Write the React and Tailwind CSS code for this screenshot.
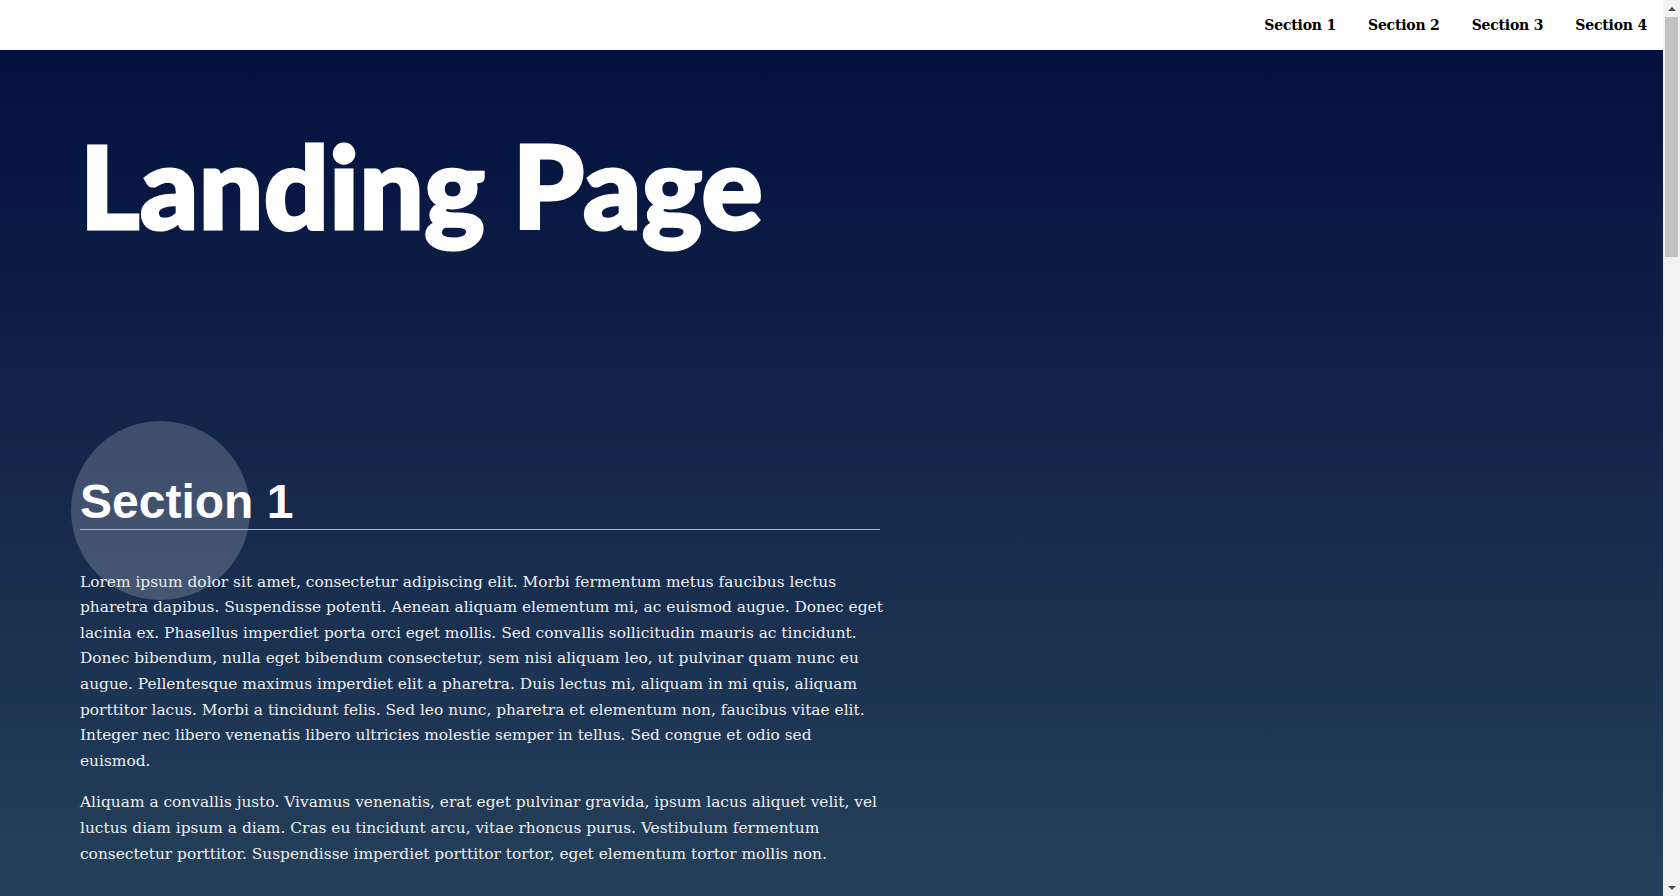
import React from 'react';

const navItems = ['Section 1', 'Section 2', 'Section 3', 'Section 4'];

// lines kept as in the reference so the wrap matches
const paraOne = [
  'Lorem ipsum dolor sit amet, consectetur adipiscing elit. Morbi fermentum metus faucibus lectus',
  'pharetra dapibus. Suspendisse potenti. Aenean aliquam elementum mi, ac euismod augue. Donec eget',
  'lacinia ex. Phasellus imperdiet porta orci eget mollis. Sed convallis sollicitudin mauris ac tincidunt.',
  'Donec bibendum, nulla eget bibendum consectetur, sem nisi aliquam leo, ut pulvinar quam nunc eu',
  'augue. Pellentesque maximus imperdiet elit a pharetra. Duis lectus mi, aliquam in mi quis, aliquam',
  'porttitor lacus. Morbi a tincidunt felis. Sed leo nunc, pharetra et elementum non, faucibus vitae elit.',
  'Integer nec libero venenatis libero ultricies molestie semper in tellus. Sed congue et odio sed',
  'euismod.',
];

const paraTwo = [
  'Aliquam a convallis justo. Vivamus venenatis, erat eget pulvinar gravida, ipsum lacus aliquet velit, vel',
  'luctus diam ipsum a diam. Cras eu tincidunt arcu, vitae rhoncus purus. Vestibulum fermentum',
  'consectetur porttitor. Suspendisse imperdiet porttitor tortor, eget elementum tortor mollis non.',
];

const Lines = ({ lines }) =>
  lines.map((line, i) => (
    <React.Fragment key={i}>
      {line}
      {i < lines.length - 1 && <br />}
    </React.Fragment>
  ));

const Section = ({ title, active }) => (
  <section className="relative min-h-[80vh]">
    <div className="relative max-w-[928px] p-16">
      {/* Active section bubble */}
      {active && (
        <div className="absolute left-[55px] top-[50px] w-[179px] h-[179px] rounded-full bg-[rgba(255,255,255,0.187)]"></div>
      )}
      <h2 className="relative mt-[40px] border-b border-[#cccc11] font-['Liberation_Sans',Arial,sans-serif] text-[48px] font-bold leading-[53.6px] text-white">
        {title}
      </h2>
      <p className="relative mt-[40px] text-[15.4px] leading-[25.6px] text-[#eeeeee] whitespace-nowrap">
        <Lines lines={paraOne} />
      </p>
      <p className="relative mt-4 text-[15.4px] leading-[25.6px] text-[#eeeeee] whitespace-nowrap">
        <Lines lines={paraTwo} />
      </p>
    </div>
  </section>
);

const App = () => {
  return (
    <div className="min-h-[3220px] pr-[17px] bg-[linear-gradient(0deg,#88cbab_0%,#000d3c_100%)] font-['DejaVu_Serif',serif] text-white">
      {/* Header */}
      <header className="sticky top-0 z-10 bg-white">
        <nav>
          <ul className="flex justify-end h-[50px] items-center">
            {navItems.map((item) => (
              <li key={item}>
                <a href="#" className="block px-4 py-3 text-[14px] tracking-[-0.2px] font-bold text-black">
                  {item}
                </a>
              </li>
            ))}
          </ul>
        </nav>
      </header>

      <main className="px-4 pt-[68px] pb-[10vh]">
        {/* Hero */}
        <h1 className="ml-16 mb-[119px] font-['Lato',sans-serif] text-[114px] font-black leading-[134px] tracking-[0.4px] text-white [-webkit-text-stroke:3px_white]">
          Landing Page
        </h1>

        <Section title="Section 1" active />
        <Section title="Section 2" />
        <Section title="Section 3" />
        <Section title="Section 4" />
      </main>

      {/* Browser scrollbar as seen in the screenshot */}
      <div className="fixed right-0 top-0 z-20 flex h-screen w-[17px] flex-col items-center bg-[#f1f1f1]">
        <div className="flex h-[17px] w-full items-center justify-center">
          <div className="h-0 w-0 border-x-[4px] border-b-[4px] border-x-transparent border-b-[#505050]"></div>
        </div>
        <div className="h-[240px] w-[13px] bg-[#c1c1c1]"></div>
        <div className="flex-1"></div>
        <div className="flex h-[17px] w-full items-center justify-center">
          <div className="h-0 w-0 border-x-[4px] border-t-[4px] border-x-transparent border-t-[#505050]"></div>
        </div>
      </div>
    </div>
  );
};

export default App;
